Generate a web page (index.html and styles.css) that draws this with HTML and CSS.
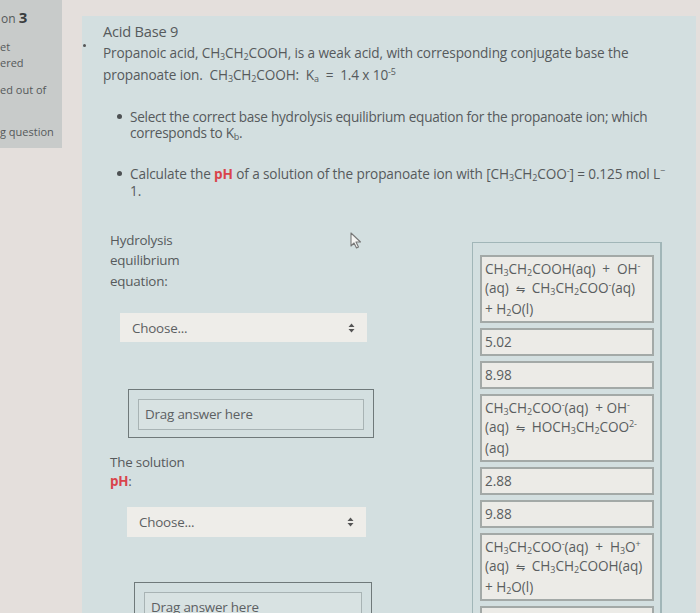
FILE: index.html
```html
<!DOCTYPE html>
<html>
<head>
<meta charset="utf-8">
<link rel="stylesheet" href="styles.css">
</head>
<body>
<div class="page">
  <aside class="sidebar">
    <div class="qno">on <b>3</b></div>
    <div class="s-et">et</div>
    <div class="s-ered">ered</div>
    <div class="s-out">ed out of</div>
    <div class="s-flag">g question</div>
  </aside>
  <main class="main">
    <span class="flagdot"></span>
    <div class="qtext">
      <p class="title">Acid Base 9</p>
      <p class="intro">Propanoic acid, CH<sub>3</sub>CH<sub>2</sub>COOH, is a weak acid, with corresponding conjugate base the<br>propanoate ion.&nbsp; CH<sub>3</sub>CH<sub>2</sub>COOH:&nbsp; K<sub>a</sub>&nbsp; =&nbsp; 1.4 x 10<sup>-5</sup></p>
      <ul class="bullets">
        <li class="b1"><span class="dot"></span><span>Select the correct base hydrolysis equilibrium equation for the propanoate ion; which<br>corresponds to K<sub>b</sub>.</span></li>
        <li class="b2"><span class="dot"></span><span>Calculate the <strong class="red">pH</strong> of a solution of the propanoate ion with [CH<sub>3</sub>CH<sub>2</sub>COO<sup>-</sup>] = 0.125 mol L<sup>−</sup><br>1.</span></li>
      </ul>
    </div>
    <div class="qarea">
      <div class="leftcol">
        <div class="label l1">Hydrolysis<br>equilibrium<br>equation:</div>
        <div class="select s1"><span>Choose...</span>
          <svg class="arr" width="7" height="10" viewBox="0 0 7 10"><path d="M3.5 0.5 L6.5 4 L0.5 4 Z M3.5 9.5 L6.5 6 L0.5 6 Z" fill="#555"/></svg>
        </div>
        <div class="drop d1"><div class="dropin">Drag answer here</div></div>
        <div class="label l2">The solution<br><strong class="red">pH</strong>:</div>
        <div class="select s2"><span>Choose...</span>
          <svg class="arr" width="7" height="10" viewBox="0 0 7 10"><path d="M3.5 0.5 L6.5 4 L0.5 4 Z M3.5 9.5 L6.5 6 L0.5 6 Z" fill="#555"/></svg>
        </div>
        <div class="drop d2"><div class="dropin">Drag answer here</div></div>
        <svg class="cursor" width="13" height="17" viewBox="0 0 13 17"><path d="M1 1 L1 14 L4 11 L6.5 16 L8.5 15 L6 10 L10.5 10 Z" fill="#f4f4f2" stroke="#777" stroke-width="1.1" stroke-linejoin="round"/></svg>
      </div>
      <div class="pool">
        <div class="item">CH<sub>3</sub>CH<sub>2</sub>COOH(aq)&nbsp; +&nbsp; OH<sup>-</sup><br>(aq)&nbsp; <span class="eq">⇋</span>&nbsp; CH<sub>3</sub>CH<sub>2</sub>COO<sup>-</sup>(aq)<br>+ H<sub>2</sub>O(l)</div>
        <div class="item">5.02</div>
        <div class="item">8.98</div>
        <div class="item">CH<sub>3</sub>CH<sub>2</sub>COO<sup>-</sup>(aq)&nbsp; +&nbsp;OH<sup>-</sup><br>(aq)&nbsp; <span class="eq">⇋</span>&nbsp; HOCH<sub>3</sub>CH<sub>2</sub>COO<sup>2-</sup><br>(aq)</div>
        <div class="item">2.88</div>
        <div class="item">9.88</div>
        <div class="item">CH<sub>3</sub>CH<sub>2</sub>COO<sup>-</sup>(aq)&nbsp; +&nbsp; H<sub>3</sub>O<sup>+</sup><br>(aq)&nbsp; <span class="eq">⇋</span>&nbsp; CH<sub>3</sub>CH<sub>2</sub>COOH(aq)<br>+ H<sub>2</sub>O(l)</div>
        <div class="item">10.05</div>
      </div>
    </div>
  </main>
</div>
</body>
</html>
```
FILE: styles.css
```css
* { box-sizing: border-box; }
html, body { margin: 0; padding: 0; }
body {
  width: 700px;
  height: 613px;
  overflow: hidden;
  background: #e4dfdc;
  font-family: "Open Sans", "Noto Sans", sans-serif;
  color: #565a5c;
}
.page {
  display: flex;
  align-items: flex-start;
  height: 613px;
}
.sidebar {
  width: 62px;
  height: 148px;
  flex: none;
  background: #c8cbca;
  color: #55595a;
  font-size: 11px;
  line-height: 14px;
  overflow: hidden;
  white-space: nowrap;
}
.qno { font-size: 12px; margin-top: 10px; padding-left: 1px; }
.qno b { font-size: 15px; font-weight: 700; color: #3a3d3e; }
.s-et { margin-top: 14px; }
.s-ered { margin-top: 2px; }
.s-out { margin-top: 13px; }
.s-flag { margin-top: 28px; }

.main {
  position: relative;
  margin-left: 20px;
  margin-top: 16px;
  width: 614px;
  height: 597px;
  background: #d3dfe0;
  padding: 4px 0 0 21px;
}
.flagdot {
  position: absolute;
  left: 1px;
  top: 28px;
  width: 3px;
  height: 3px;
  border-radius: 50%;
  background: #555;
}
.qtext {
  font-size: 13.6px;
  letter-spacing: -0.12px;
}
p { margin: 0; }
.title, .intro { line-height: 22px; }
.title { font-size: 14.6px; letter-spacing: -0.2px; }
sub, sup { font-size: 0.66em; line-height: 0; }
sub { vertical-align: -0.25em; }
sup { vertical-align: 0.55em; }
.red { color: #d9444b; font-weight: 700; }
.bullets {
  list-style: none;
  margin: 23px 0 0 0;
  padding: 0 0 0 14px;
  width: 570px;
}
.bullets li { display: flex; align-items: flex-start; }
.b1 { line-height: 15.5px; letter-spacing: -0.26px; }
.b2 { line-height: 17px; margin-top: 24.5px; }
.dot {
  flex: none;
  width: 5px;
  height: 5px;
  border-radius: 50%;
  background: #4d5153;
  margin: 5px 8px 0 0;
}
.b2 .dot { margin-top: 6px; }
.qarea {
  display: flex;
  align-items: flex-start;
  margin-top: 31px;
}
.leftcol {
  position: relative;
  width: 275px;
  padding-left: 7px;
  font-size: 13.4px;
  letter-spacing: -0.2px;
}
.label { line-height: 20.5px; }
.l2 { line-height: 19px; margin-top: 15px; }
.select {
  display: flex;
  align-items: center;
  justify-content: space-between;
  background: #eeede9;
  color: #5c6062;
  height: 29px;
  padding: 0 12px 0 12px;
}
.s1 { margin: 22px 0 0 10px; width: 247px; }
.s2 { margin: 16px 0 0 17px; width: 239px; height: 30px; }
.drop {
  border: 1px solid #6f797a;
  padding: 9px;
  height: 49px;
}
.d1 { margin: 47px 0 0 18px; width: 246px; }
.d2 { margin: 45px 0 0 24px; width: 238px; height: 60px; }
.dropin {
  border: 1px solid #a8b3b4;
  background: #d8e2e2;
  height: 31px;
  line-height: 29px;
  padding-left: 6px;
  color: #5c6062;
}
.cursor {
  position: absolute;
  left: 247px;
  top: 2px;
}
.pool {
  margin: 12px 0 0 94px;
  width: 190px;
  border: 1px solid #a1b6b8;
  border-right-width: 2px;
  padding: 12px 6px 0 7px;
  height: 400px;
  display: flex;
  flex-direction: column;
  gap: 5px;
}
.item {
  background: #ecebe7;
  border: 2px solid #a3a9a7;
  padding: 2.5px 3px;
  font-size: 13.6px;
  letter-spacing: -0.05px;
  line-height: 19px;
  color: #5a5e60;
  white-space: nowrap;
  overflow: hidden;
  flex: none;
}
.eq { font-family: "DejaVu Sans", sans-serif; font-size: 11px; }
```
